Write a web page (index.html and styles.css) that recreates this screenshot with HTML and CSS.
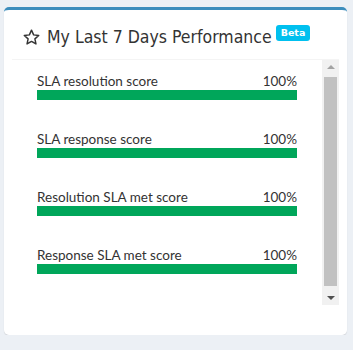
FILE: index.html
```html
<!DOCTYPE html>
<html lang="en">
  <head>
    <meta charset="UTF-8" />
    <title>My Last 7 Days Performance</title>
    <link rel="stylesheet" href="styles.css">
  </head>
  <body>
    <div class="box">
      <div class="box-header">
        <svg class="star" width="17" height="17" viewBox="0 0 16 16">
          <path d="M8 1.1 L10 5.55 L14.8 6.05 L11.2 9.3 L12.2 14.1 L8 11.65 L3.8 14.1 L4.8 9.3 L1.2 6.05 L6 5.55 Z" fill="none" stroke="#333" stroke-width="1.35" stroke-linejoin="round" />
        </svg>
        <h3 class="box-title">My Last 7 Days Performance</h3>
        <span class="badge">Beta</span>
      </div>
      <div class="box-body">
        <div class="score-list">
          <div class="score">
            <div class="score-head">
              <span>SLA resolution score</span>
              <span class="score-value">100%</span>
            </div>
            <div class="progress"><div class="progress-bar" style="width: 100%"></div></div>
          </div>
          <div class="score">
            <div class="score-head">
              <span>SLA response score</span>
              <span class="score-value">100%</span>
            </div>
            <div class="progress"><div class="progress-bar" style="width: 100%"></div></div>
          </div>
          <div class="score">
            <div class="score-head">
              <span>Resolution SLA met score</span>
              <span class="score-value">100%</span>
            </div>
            <div class="progress"><div class="progress-bar" style="width: 100%"></div></div>
          </div>
          <div class="score">
            <div class="score-head">
              <span>Response SLA met score</span>
              <span class="score-value">100%</span>
            </div>
            <div class="progress"><div class="progress-bar" style="width: 100%"></div></div>
          </div>
        </div>
        <div class="scrollbar">
          <div class="scroll-btn"><span class="arrow-up"></span></div>
          <div class="scroll-thumb"></div>
          <div class="scroll-btn"><span class="arrow-down"></span></div>
        </div>
      </div>
    </div>
  </body>
</html>
```

FILE: styles.css
```css
* {
  box-sizing: border-box;
  margin: 0;
  padding: 0;
}

body {
  background-color: #ecf0f5;
  font-family: "Lato", "Open Sans", sans-serif;
  color: #333;
  padding: 7px 6px 0 4px;
}

.box {
  background: #ffffff;
  border-top: 3px solid #3c8dbc;
  border-radius: 5px;
  box-shadow: 0 1px 1px rgba(0, 0, 0, 0.12);
  padding: 0 8px 30px 8px;
}

.box-header {
  display: flex;
  align-items: flex-start;
  padding: 17px 10px 12px;
  border-bottom: 1px solid #f4f4f4;
}

.star {
  margin-top: 2px;
  margin-left: 1px;
  flex-shrink: 0;
}

.box-title {
  font-family: "DejaVu Sans Condensed", "DejaVu Sans", sans-serif;
  font-weight: normal;
  font-size: 17.5px;
  line-height: 20px;
  color: #333;
  margin-left: 7px;
  white-space: nowrap;
}

.badge {
  margin-top: -2px;
  margin-left: 4px;
  background-color: #00c0ef;
  color: #ffffff;
  font-family: "DejaVu Sans", sans-serif;
  font-weight: bold;
  font-size: 9.5px;
  line-height: 16px;
  padding: 0 5px;
  border-radius: 3px;
}

.box-body {
  height: 245px;
  display: flex;
}

.score-list {
  flex: 1;
  overflow: hidden;
  padding: 12px 25px 5px 25px;
}

.score {
  margin-bottom: 30px;
}

.score-head {
  display: flex;
  justify-content: space-between;
  font-size: 13.5px;
  line-height: 18px;
}

.progress {
  height: 10px;
  background: #f5f5f5;
}

.progress-bar {
  height: 100%;
  background-color: #00a65a;
}

.scrollbar {
  width: 17px;
  background: #f1f1f1;
  display: flex;
  flex-direction: column;
}

.scroll-btn {
  height: 17px;
  display: flex;
  justify-content: center;
  align-items: center;
}

.scroll-thumb {
  flex: 1;
  margin: 0 2px 2px;
  background: #c1c1c1;
}

.arrow-up {
  border-left: 4px solid transparent;
  border-right: 4px solid transparent;
  border-bottom: 4px solid #a3a3a3;
  margin-bottom: 3px;
}

.arrow-down {
  border-left: 4px solid transparent;
  border-right: 4px solid transparent;
  border-top: 4px solid #505050;
  margin-top: 3px;
}
```
